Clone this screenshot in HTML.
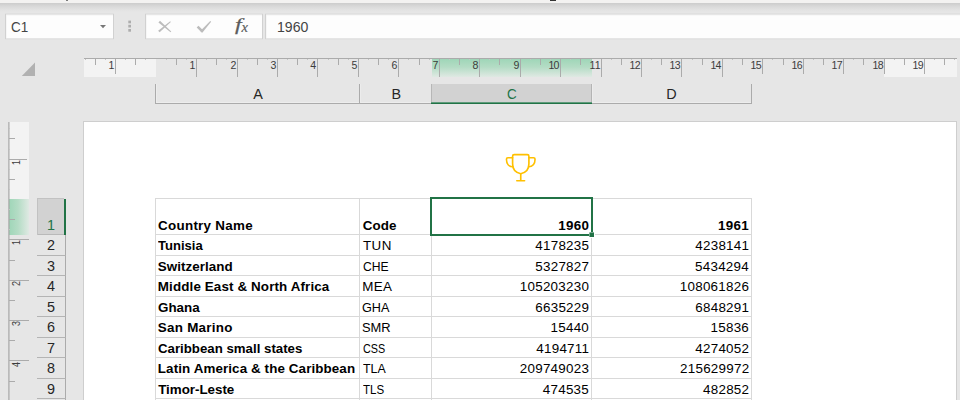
<!DOCTYPE html>
<html lang="en"><head><meta charset="utf-8"><title>Sheet</title>
<style>

html,body{margin:0;padding:0;}
body{width:960px;height:400px;overflow:hidden;background:#e6e6e6;position:relative;font-family:"Liberation Sans",sans-serif;color:#000;}
.a{position:absolute;}
.box{position:absolute;background:#fdfdfd;border:1px solid #d1d1d1;box-sizing:border-box;box-shadow:inset 0 1px 0 #f4f4f4,inset 1px 0 0 #f6f6f6;transform:translateY(0.45px);}
.x{position:absolute;white-space:nowrap;font-family:"Liberation Sans",sans-serif;line-height:20px;height:20px;}
.ui{font-size:14.2px;color:#444;}
.rn{font-size:10.6px;color:#3c3c3c;}
.vn{font-size:10.6px;color:#3c3c3c;transform-origin:0 0;transform:rotate(-90deg);}
.hd{font-size:14.4px;color:#262626;}
.c{font-size:13.4px;color:#000;}
.b{font-weight:bold;}
.t{position:absolute;background:#ababab;}
.s{position:absolute;background:#c4c4c4;}
.ch{position:absolute;top:84px;height:19px;border-right:1px solid #ababab;border-bottom:1px solid #ababab;box-sizing:content-box;}
.rh{position:absolute;left:37px;width:28px;border-right:1px solid #ababab;border-bottom:1px solid #b4b4b4;box-sizing:content-box;}
.gl{position:absolute;background:#d9d9d9;}

</style></head><body>
<div class="a" style="left:0;top:0;width:960px;height:3px;background:#f3f2f1"></div>
<div class="a" style="left:0;top:3px;width:960px;height:9px;background:linear-gradient(#cccccc,#d8d8d8 35%,#e1e1e1 70%,#e6e6e6)"></div>
<div class="a" style="left:66px;top:0;width:2px;height:1px;background:#7a7a7a"></div>
<div class="a" style="left:550px;top:0;width:6px;height:1px;background:#333"></div>
<div class="box" style="left:5px;top:13px;width:109px;height:26px"></div>
<svg class="a" style="left:100px;top:25px" width="6" height="4" viewBox="0 0 6 4"><path d="M0 0h6L3 3.2z" fill="#777"/></svg>
<svg class="a" style="left:126px;top:18px" width="8" height="16" viewBox="126 18 8 16"><g fill="#adadad"><rect x="128.3" y="20.6" width="2.7" height="2.7"/><rect x="128.3" y="24.8" width="2.7" height="2.7"/><rect x="128.3" y="29.0" width="2.7" height="2.7"/></g></svg>
<div class="box" style="left:145px;top:13px;width:118px;height:26px"></div>
<svg class="a" style="left:150px;top:14px" width="72" height="24" viewBox="150 14 72 24"><g fill="#bcbcbc"><path d="M158.44 22.46 L170.57 32.28 L171.23 31.52 L159.96 20.74Z"/><path d="M159.65 32.37 L170.82 21.98 L170.18 21.22 L158.15 30.63Z"/><path d="M196.68 27.52 L201.68 32.52 L203.52 30.68 L198.52 25.68Z"/><path d="M202.27 32.76 L211.15 21.70 L210.25 20.90 L200.33 31.04Z"/></g></svg>
<div class="a" style="left:0;top:0;font-family:'Liberation Serif',serif;font-style:italic;line-height:20px;color:#5c5c5c;white-space:nowrap"><span class="a" style="left:235.2px;top:15px;font-size:16.5px;transform-origin:0 50%;transform:scaleX(1.45);-webkit-text-stroke:0.25px #5c5c5c">f</span><span class="a" style="left:241.6px;top:17px;font-size:14.5px;-webkit-text-stroke:0.2px #5c5c5c">x</span></div>
<div class="box" style="left:265px;top:13px;width:700px;height:26px"></div>
<div class="a" style="left:84px;top:59px;width:72px;height:18px;background:#f3f3f3"></div>
<div class="a" style="left:884px;top:59px;width:73px;height:18px;background:#f3f3f3"></div>
<div class="a" style="left:432px;top:59px;width:160px;height:18px;background:linear-gradient(#9fd6b8,#b4dcc5 45%,#dfe9e3)"></div>
<div class="t" style="left:84px;top:58px;width:873px;height:1px"></div>
<div class="s" style="left:85px;top:59px;width:1px;height:1px"></div>
<div class="t" style="left:95px;top:59px;width:1px;height:6px"></div>
<div class="s" style="left:105px;top:59px;width:1px;height:1px"></div>
<div class="t" style="left:115px;top:59px;width:1px;height:15px"></div>
<div class="s" style="left:125px;top:59px;width:1px;height:1px"></div>
<div class="t" style="left:135px;top:59px;width:1px;height:6px"></div>
<div class="s" style="left:145px;top:59px;width:1px;height:1px"></div>
<div class="s" style="left:166px;top:59px;width:1px;height:1px"></div>
<div class="t" style="left:176px;top:59px;width:1px;height:6px"></div>
<div class="s" style="left:186px;top:59px;width:1px;height:1px"></div>
<div class="t" style="left:196px;top:59px;width:1px;height:18px"></div>
<div class="s" style="left:206px;top:59px;width:1px;height:1px"></div>
<div class="t" style="left:216px;top:59px;width:1px;height:6px"></div>
<div class="s" style="left:226px;top:59px;width:1px;height:1px"></div>
<div class="t" style="left:237px;top:59px;width:1px;height:18px"></div>
<div class="s" style="left:247px;top:59px;width:1px;height:1px"></div>
<div class="t" style="left:257px;top:59px;width:1px;height:6px"></div>
<div class="s" style="left:267px;top:59px;width:1px;height:1px"></div>
<div class="t" style="left:277px;top:59px;width:1px;height:18px"></div>
<div class="s" style="left:287px;top:59px;width:1px;height:1px"></div>
<div class="t" style="left:297px;top:59px;width:1px;height:6px"></div>
<div class="s" style="left:307px;top:59px;width:1px;height:1px"></div>
<div class="t" style="left:317px;top:59px;width:1px;height:18px"></div>
<div class="s" style="left:328px;top:59px;width:1px;height:1px"></div>
<div class="t" style="left:338px;top:59px;width:1px;height:6px"></div>
<div class="s" style="left:348px;top:59px;width:1px;height:1px"></div>
<div class="t" style="left:358px;top:59px;width:1px;height:18px"></div>
<div class="s" style="left:368px;top:59px;width:1px;height:1px"></div>
<div class="t" style="left:378px;top:59px;width:1px;height:6px"></div>
<div class="s" style="left:388px;top:59px;width:1px;height:1px"></div>
<div class="t" style="left:398px;top:59px;width:1px;height:18px"></div>
<div class="s" style="left:408px;top:59px;width:1px;height:1px"></div>
<div class="t" style="left:419px;top:59px;width:1px;height:6px"></div>
<div class="s" style="left:429px;top:59px;width:1px;height:1px"></div>
<div class="t" style="left:439px;top:59px;width:1px;height:18px"></div>
<div class="s" style="left:449px;top:59px;width:1px;height:1px"></div>
<div class="t" style="left:459px;top:59px;width:1px;height:6px"></div>
<div class="s" style="left:469px;top:59px;width:1px;height:1px"></div>
<div class="t" style="left:479px;top:59px;width:1px;height:18px"></div>
<div class="s" style="left:489px;top:59px;width:1px;height:1px"></div>
<div class="t" style="left:499px;top:59px;width:1px;height:6px"></div>
<div class="s" style="left:510px;top:59px;width:1px;height:1px"></div>
<div class="t" style="left:520px;top:59px;width:1px;height:18px"></div>
<div class="s" style="left:530px;top:59px;width:1px;height:1px"></div>
<div class="t" style="left:540px;top:59px;width:1px;height:6px"></div>
<div class="s" style="left:550px;top:59px;width:1px;height:1px"></div>
<div class="t" style="left:560px;top:59px;width:1px;height:18px"></div>
<div class="s" style="left:570px;top:59px;width:1px;height:1px"></div>
<div class="t" style="left:580px;top:59px;width:1px;height:6px"></div>
<div class="s" style="left:590px;top:59px;width:1px;height:1px"></div>
<div class="t" style="left:601px;top:59px;width:1px;height:18px"></div>
<div class="s" style="left:611px;top:59px;width:1px;height:1px"></div>
<div class="t" style="left:621px;top:59px;width:1px;height:6px"></div>
<div class="s" style="left:631px;top:59px;width:1px;height:1px"></div>
<div class="t" style="left:641px;top:59px;width:1px;height:18px"></div>
<div class="s" style="left:651px;top:59px;width:1px;height:1px"></div>
<div class="t" style="left:661px;top:59px;width:1px;height:6px"></div>
<div class="s" style="left:671px;top:59px;width:1px;height:1px"></div>
<div class="t" style="left:681px;top:59px;width:1px;height:18px"></div>
<div class="s" style="left:692px;top:59px;width:1px;height:1px"></div>
<div class="t" style="left:702px;top:59px;width:1px;height:6px"></div>
<div class="s" style="left:712px;top:59px;width:1px;height:1px"></div>
<div class="t" style="left:722px;top:59px;width:1px;height:18px"></div>
<div class="s" style="left:732px;top:59px;width:1px;height:1px"></div>
<div class="t" style="left:742px;top:59px;width:1px;height:6px"></div>
<div class="s" style="left:752px;top:59px;width:1px;height:1px"></div>
<div class="t" style="left:762px;top:59px;width:1px;height:15px"></div>
<div class="s" style="left:772px;top:59px;width:1px;height:1px"></div>
<div class="t" style="left:783px;top:59px;width:1px;height:6px"></div>
<div class="s" style="left:793px;top:59px;width:1px;height:1px"></div>
<div class="t" style="left:803px;top:59px;width:1px;height:15px"></div>
<div class="s" style="left:813px;top:59px;width:1px;height:1px"></div>
<div class="t" style="left:823px;top:59px;width:1px;height:6px"></div>
<div class="s" style="left:833px;top:59px;width:1px;height:1px"></div>
<div class="t" style="left:843px;top:59px;width:1px;height:15px"></div>
<div class="s" style="left:853px;top:59px;width:1px;height:1px"></div>
<div class="t" style="left:863px;top:59px;width:1px;height:6px"></div>
<div class="s" style="left:874px;top:59px;width:1px;height:1px"></div>
<div class="t" style="left:884px;top:59px;width:1px;height:15px"></div>
<div class="s" style="left:894px;top:59px;width:1px;height:1px"></div>
<div class="t" style="left:904px;top:59px;width:1px;height:6px"></div>
<div class="s" style="left:914px;top:59px;width:1px;height:1px"></div>
<div class="t" style="left:924px;top:59px;width:1px;height:15px"></div>
<div class="s" style="left:934px;top:59px;width:1px;height:1px"></div>
<div class="t" style="left:944px;top:59px;width:1px;height:6px"></div>
<div class="s" style="left:954px;top:59px;width:1px;height:1px"></div>
<div class="a" style="left:155px;top:84px;width:1px;height:20px;background:#ababab"></div>
<div class="ch" style="left:156px;width:203px;box-shadow:inset 0 -1px 0 #ededed,inset 1px 0 0 #ececec"></div>
<div class="ch" style="left:360px;width:71px;box-shadow:inset 0 -1px 0 #ededed,inset 1px 0 0 #ececec"></div>
<div class="ch" style="left:431px;width:159px;background:#d2d2d2;height:18px;border-left:1px solid #b7b7b7;border-right-color:#b4b4b4;border-bottom:0"></div>
<div class="a" style="left:431px;top:102px;width:161px;height:1px;background:#5f9b7b"></div>
<div class="a" style="left:431px;top:103px;width:161px;height:1px;background:#217346"></div>
<div class="ch" style="left:592px;width:159px;box-shadow:inset 0 -1px 0 #ededed,inset 1px 0 0 #ececec"></div>
<svg class="a" style="left:21px;top:62px" width="15" height="15" viewBox="0 0 15 15"><path d="M14 0.6V14H0.8z" fill="#b1b1b1"/></svg>
<div class="a" style="left:83px;top:121px;width:874px;height:300px;background:#fff;border:1px solid #cecece;box-sizing:border-box"></div>
<div class="a" style="left:9px;top:122px;width:20px;height:77px;background:#f3f3f3"></div>
<div class="a" style="left:9px;top:199px;width:20px;height:36px;background:linear-gradient(90deg,#9fd6b8,#b4dcc5 45%,#dfe9e3)"></div>
<div class="a" style="left:8px;top:122px;width:1px;height:278px;background:#bababa"></div>
<div class="a" style="left:9px;top:122px;width:1px;height:278px;background:rgba(160,160,160,0.45)"></div>
<div class="s" style="left:9px;top:128px;width:1px;height:1px"></div>
<div class="t" style="left:9px;top:138px;width:6px;height:1px"></div>
<div class="s" style="left:9px;top:149px;width:1px;height:1px"></div>
<div class="t" style="left:9px;top:159px;width:18px;height:1px"></div>
<div class="s" style="left:9px;top:169px;width:1px;height:1px"></div>
<div class="t" style="left:9px;top:179px;width:6px;height:1px"></div>
<div class="s" style="left:9px;top:189px;width:1px;height:1px"></div>
<div class="s" style="left:9px;top:209px;width:1px;height:1px"></div>
<div class="t" style="left:9px;top:219px;width:6px;height:1px"></div>
<div class="s" style="left:9px;top:229px;width:1px;height:1px"></div>
<div class="t" style="left:9px;top:239px;width:20px;height:1px"></div>
<div class="s" style="left:9px;top:249px;width:1px;height:1px"></div>
<div class="t" style="left:9px;top:260px;width:6px;height:1px"></div>
<div class="s" style="left:9px;top:270px;width:1px;height:1px"></div>
<div class="t" style="left:9px;top:280px;width:20px;height:1px"></div>
<div class="s" style="left:9px;top:290px;width:1px;height:1px"></div>
<div class="t" style="left:9px;top:300px;width:6px;height:1px"></div>
<div class="s" style="left:9px;top:310px;width:1px;height:1px"></div>
<div class="t" style="left:9px;top:320px;width:20px;height:1px"></div>
<div class="s" style="left:9px;top:330px;width:1px;height:1px"></div>
<div class="t" style="left:9px;top:340px;width:6px;height:1px"></div>
<div class="s" style="left:9px;top:350px;width:1px;height:1px"></div>
<div class="t" style="left:9px;top:360px;width:20px;height:1px"></div>
<div class="s" style="left:9px;top:370px;width:1px;height:1px"></div>
<div class="t" style="left:9px;top:381px;width:6px;height:1px"></div>
<div class="s" style="left:9px;top:391px;width:1px;height:1px"></div>
<div class="a" style="left:37px;top:198px;height:37px;width:27px;background:#d2d2d2;box-shadow:inset 1px 1px 0 #c2c2c2,inset 0 -1px 0 #b9b9b9"></div>
<div class="a" style="left:64px;top:199px;height:36px;width:2px;background:#217346"></div>
<div class="rh" style="top:235px;height:20px"></div>
<div class="rh" style="top:256px;height:19px"></div>
<div class="rh" style="top:276px;height:20px"></div>
<div class="rh" style="top:297px;height:19px"></div>
<div class="rh" style="top:317px;height:20px"></div>
<div class="rh" style="top:338px;height:19px"></div>
<div class="rh" style="top:358px;height:20px"></div>
<div class="rh" style="top:379px;height:19px"></div>
<div class="rh" style="top:399px;height:20px"></div>
<div class="gl" style="left:155px;top:198px;width:1px;height:202px"></div>
<div class="gl" style="left:359px;top:198px;width:1px;height:202px"></div>
<div class="gl" style="left:431px;top:198px;width:1px;height:202px"></div>
<div class="gl" style="left:591px;top:198px;width:1px;height:202px"></div>
<div class="gl" style="left:751px;top:198px;width:1px;height:202px"></div>
<div class="gl" style="left:155px;top:198px;width:597px;height:1px"></div>
<div class="gl" style="left:155px;top:234px;width:597px;height:1px"></div>
<div class="gl" style="left:155px;top:255px;width:597px;height:1px"></div>
<div class="gl" style="left:155px;top:275px;width:597px;height:1px"></div>
<div class="gl" style="left:155px;top:296px;width:597px;height:1px"></div>
<div class="gl" style="left:155px;top:316px;width:597px;height:1px"></div>
<div class="gl" style="left:155px;top:337px;width:597px;height:1px"></div>
<div class="gl" style="left:155px;top:357px;width:597px;height:1px"></div>
<div class="gl" style="left:155px;top:378px;width:597px;height:1px"></div>
<div class="gl" style="left:155px;top:398px;width:597px;height:1px"></div>
<div class="a" style="left:430px;top:197px;width:163px;height:39px;border:2px solid #217346;box-sizing:border-box"></div>
<div class="a" style="left:589px;top:232px;width:6px;height:6px;background:#fff"></div>
<svg class="a" style="left:589px;top:232px" width="6" height="6" viewBox="0 0 6 6"><rect x="0.4" y="0.4" width="4.6" height="4.6" fill="#217346"/></svg>
<svg class="a" style="left:500px;top:148px" width="42" height="38" viewBox="500 148 42 38"><g fill="none" stroke="#ffc000" stroke-width="1.65" stroke-linecap="round" stroke-linejoin="round"><path d="M512.6 156.2 Q512.6 154.65 514.2 154.65 H527.3 Q528.9 154.65 528.9 156.2 V163.8 C528.9 169.2 525.6 172.8 520.75 173.7 C515.9 172.8 512.6 169.2 512.6 163.8 Z"/><path d="M512.6 157.75 H507.9 Q506.45 157.75 506.45 159.2 C506.45 163.6 508.9 166.7 512.9 166.75"/><path d="M528.9 157.75 H533.6 Q535.05 157.75 535.05 159.2 C535.05 163.6 532.6 166.7 528.6 166.75"/><path d="M520.75 173.7 V180.75 M516.8 180.75 H524.6"/></g></svg>
<div class="x ui" style="left:10.89px;top:17px;transform-origin:0 0;transform:scaleX(0.9493);">C1</div>
<div class="x ui" style="left:277.01px;top:17px;transform-origin:0 0;transform:scaleX(0.9933);">1960</div>
<div class="x rn" style="left:108.60px;top:55px;">1</div>
<div class="x rn" style="left:189.60px;top:55px;">1</div>
<div class="x rn" style="left:230.60px;top:55px;">2</div>
<div class="x rn" style="left:270.60px;top:55px;">3</div>
<div class="x rn" style="left:310.35px;top:55px;">4</div>
<div class="x rn" style="left:351.60px;top:55px;">5</div>
<div class="x rn" style="left:391.60px;top:55px;">6</div>
<div class="x rn" style="left:432.60px;top:55px;">7</div>
<div class="x rn" style="left:472.60px;top:55px;">8</div>
<div class="x rn" style="left:513.60px;top:55px;">9</div>
<div class="x rn" style="left:548.45px;top:55px;letter-spacing:-0.85px;">10</div>
<div class="x rn" style="left:589.45px;top:55px;letter-spacing:0.15px;">11</div>
<div class="x rn" style="left:629.45px;top:55px;letter-spacing:-0.60px;">12</div>
<div class="x rn" style="left:669.45px;top:55px;letter-spacing:-0.60px;">13</div>
<div class="x rn" style="left:710.45px;top:55px;letter-spacing:-0.85px;">14</div>
<div class="x rn" style="left:750.45px;top:55px;letter-spacing:-0.60px;">15</div>
<div class="x rn" style="left:791.45px;top:55px;letter-spacing:-0.60px;">16</div>
<div class="x rn" style="left:831.45px;top:55px;letter-spacing:-0.60px;">17</div>
<div class="x rn" style="left:872.45px;top:55px;letter-spacing:-0.60px;">18</div>
<div class="x rn" style="left:912.45px;top:55px;letter-spacing:-0.60px;">19</div>
<div class="x hd" style="left:253.20px;top:84px;">A</div>
<div class="x hd" style="left:391.45px;top:84px;">B</div>
<div class="x hd" style="left:507.05px;top:84px;transform-origin:0 0;transform:scaleX(0.9333);color:#217346">C</div>
<div class="x hd" style="left:666.35px;top:84px;">D</div>
<div class="x vn" style="left:5.75px;top:165.38px;transform:rotate(-90deg) scaleX(0.85);">1</div>
<div class="x vn" style="left:5.75px;top:245.38px;transform:rotate(-90deg) scaleX(0.85);">1</div>
<div class="x vn" style="left:6.00px;top:286.38px;transform:rotate(-90deg) scaleX(0.85);">2</div>
<div class="x vn" style="left:6.00px;top:326.38px;transform:rotate(-90deg) scaleX(0.85);">3</div>
<div class="x vn" style="left:5.75px;top:366.59px;transform:rotate(-90deg) scaleX(0.85);">4</div>
<div class="x hd" style="left:46.88px;top:215px;color:#217346">1</div>
<div class="x hd" style="left:47.00px;top:235px;">2</div>
<div class="x hd" style="left:47.00px;top:256px;">3</div>
<div class="x hd" style="left:47.12px;top:276px;">4</div>
<div class="x hd" style="left:47.00px;top:297px;">5</div>
<div class="x hd" style="left:46.88px;top:317px;">6</div>
<div class="x hd" style="left:47.00px;top:338px;">7</div>
<div class="x hd" style="left:47.00px;top:358px;">8</div>
<div class="x hd" style="left:47.00px;top:379px;">9</div>
<div class="x c b" style="left:158.10px;top:216px;letter-spacing:0.27px;">Country Name</div>
<div class="x c b" style="left:362.70px;top:216px;letter-spacing:0.10px;">Code</div>
<div class="x c b" style="left:558.31px;top:216px;letter-spacing:0.25px;">1960</div>
<div class="x c b" style="left:718.06px;top:216px;letter-spacing:0.25px;">1961</div>
<div class="x c b" style="left:158.20px;top:236px;transform-origin:0 0;transform:scaleX(0.9739);">Tunisia</div>
<div class="x c" style="left:362.95px;top:236px;letter-spacing:0.47px;">TUN</div>
<div class="x c" style="left:535.31px;top:236px;letter-spacing:0.25px;">4178235</div>
<div class="x c" style="left:695.31px;top:236px;letter-spacing:0.25px;">4238141</div>
<div class="x c b" style="left:157.70px;top:257px;letter-spacing:0.06px;">Switzerland</div>
<div class="x c" style="left:362.52px;top:257px;transform-origin:0 0;transform:scaleX(0.9074);">CHE</div>
<div class="x c" style="left:535.31px;top:257px;letter-spacing:0.25px;">5327827</div>
<div class="x c" style="left:695.06px;top:257px;letter-spacing:0.25px;">5434294</div>
<div class="x c b" style="left:157.85px;top:277px;letter-spacing:0.12px;">Middle East &amp; North Africa</div>
<div class="x c" style="left:362.20px;top:277px;letter-spacing:0.40px;">MEA</div>
<div class="x c" style="left:519.82px;top:277px;letter-spacing:0.25px;">105203230</div>
<div class="x c" style="left:679.82px;top:277px;letter-spacing:0.25px;">108061826</div>
<div class="x c b" style="left:158.10px;top:298px;letter-spacing:-0.04px;">Ghana</div>
<div class="x c" style="left:362.49px;top:298px;transform-origin:0 0;transform:scaleX(0.9451);">GHA</div>
<div class="x c" style="left:535.31px;top:298px;letter-spacing:0.25px;">6635229</div>
<div class="x c" style="left:695.31px;top:298px;letter-spacing:0.25px;">6848291</div>
<div class="x c b" style="left:157.70px;top:318px;letter-spacing:0.29px;">San Marino</div>
<div class="x c" style="left:362.48px;top:318px;transform-origin:0 0;transform:scaleX(0.9628);">SMR</div>
<div class="x c" style="left:550.56px;top:318px;letter-spacing:0.25px;">15440</div>
<div class="x c" style="left:710.56px;top:318px;letter-spacing:0.25px;">15836</div>
<div class="x c b" style="left:158.11px;top:339px;transform-origin:0 0;transform:scaleX(0.9893);">Caribbean small states</div>
<div class="x c" style="left:362.59px;top:339px;transform-origin:0 0;transform:scaleX(0.8076);">CSS</div>
<div class="x c" style="left:536.31px;top:339px;letter-spacing:0.25px;">4194711</div>
<div class="x c" style="left:695.31px;top:339px;letter-spacing:0.25px;">4274052</div>
<div class="x c b" style="left:157.85px;top:359px;letter-spacing:0.10px;">Latin America &amp; the Caribbean</div>
<div class="x c" style="left:362.97px;top:359px;transform-origin:0 0;transform:scaleX(0.9237);">TLA</div>
<div class="x c" style="left:519.82px;top:359px;letter-spacing:0.25px;">209749023</div>
<div class="x c" style="left:680.07px;top:359px;letter-spacing:0.25px;">215629972</div>
<div class="x c b" style="left:158.20px;top:380px;letter-spacing:-0.03px;">Timor-Leste</div>
<div class="x c" style="left:362.98px;top:380px;transform-origin:0 0;transform:scaleX(0.8632);">TLS</div>
<div class="x c" style="left:542.81px;top:380px;letter-spacing:0.25px;">474535</div>
<div class="x c" style="left:703.06px;top:380px;letter-spacing:0.25px;">482852</div>
</body></html>
